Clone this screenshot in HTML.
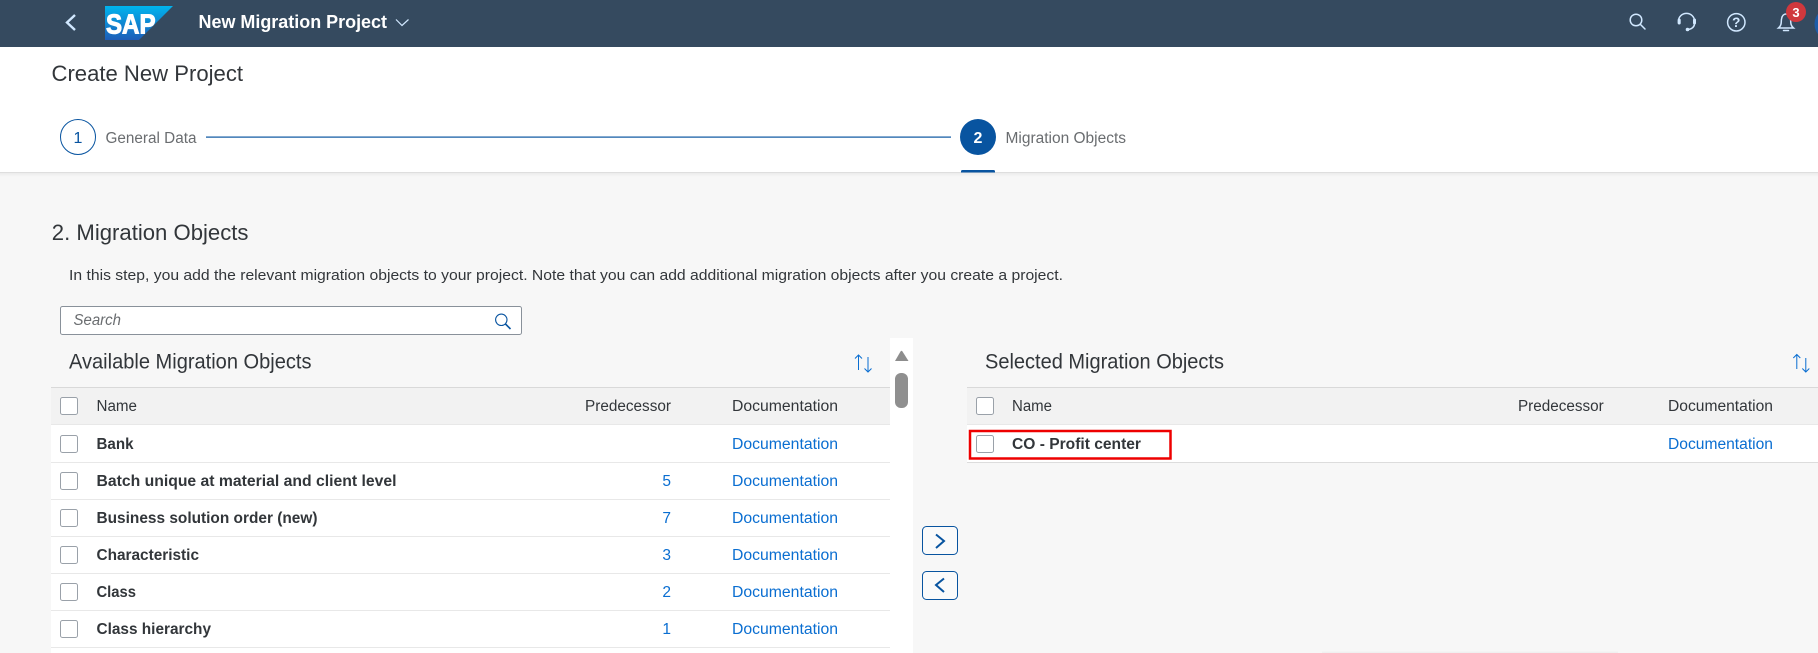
<!DOCTYPE html>
<html lang="en">
<head>
<meta charset="utf-8">
<title>Create New Project</title>
<style>
html,body{margin:0;padding:0;background:#f7f7f7;}
body{width:1818px;height:653px;overflow:hidden;}
svg{display:block;}
text{font-family:"Liberation Sans",sans-serif;}
.t{font-size:15.5px;fill:#32363a;}
.b{font-size:15.5px;fill:#32363a;font-weight:700;}
.l{font-size:15.5px;fill:#0a6ed1;}
.h{font-size:22.5px;fill:#32363a;}
.s{font-size:15.5px;fill:#6a6d70;}
.cb{fill:#fff;stroke:#9aa1a9;stroke-width:1;}
.ln{fill:#e8e8e8;}
.ic{fill:none;stroke:#d1e8ff;stroke-width:1.5;stroke-linecap:round;}
.bl{fill:none;stroke:#0a6ed1;stroke-width:1;}
</style>
</head>
<body>
<svg width="1818" height="653" viewBox="0 0 1818 653" xmlns="http://www.w3.org/2000/svg">
<defs>
<linearGradient id="g" x1="0" y1="0" x2="0" y2="1"><stop offset="0" stop-color="#00b4ee"/><stop offset="1" stop-color="#1d5db8"/></linearGradient>
<linearGradient id="sh" x1="0" y1="0" x2="0" y2="1"><stop offset="0" stop-color="#ececec"/><stop offset="1" stop-color="#f7f7f7"/></linearGradient>
</defs>
<rect width="1818" height="653" fill="#f7f7f7"/>

<!-- shell bar -->
<rect width="1818" height="47" fill="#354a5f"/>
<path d="M75 15 L67 22.500 L75 30" fill="none" stroke="#d1e8ff" stroke-width="2.400"/>
<polygon points="105,6 173,6 139,40 105,40" fill="url(#g)"/>
<text x="106" y="33.500" font-size="28" font-weight="700" fill="#fff" stroke="#fff" stroke-width="1.100" textLength="49.500" lengthAdjust="spacingAndGlyphs">SAP</text>
<text x="198.500" y="28" font-size="18.500" font-weight="700" fill="#fff" textLength="188.500" lengthAdjust="spacingAndGlyphs">New Migration Project</text>
<path d="M396 19.500 L402 25.500 L408.500 19.500" fill="none" stroke="#d1e8ff" stroke-width="1.200"/>

<circle cx="1636" cy="20" r="5.800" class="ic"/><path d="M1640.500 24.500 L1645 29" class="ic" stroke-width="2"/>
<path d="M1678.500 23 V21 a8 7.600 0 0 1 16 0 V24 a7 6 0 0 1 -6 5.500" class="ic"/>
<rect x="1677.700" y="18.500" width="3" height="6" rx="1.500" fill="#d1e8ff"/><rect x="1693" y="18.500" width="3" height="6" rx="1.500" fill="#d1e8ff"/><circle cx="1687.500" cy="29.500" r="1.800" fill="#d1e8ff"/>
<circle cx="1736.300" cy="22.300" r="8.700" class="ic" stroke-width="1.300"/>
<text x="1736.300" y="27" text-anchor="middle" font-size="13.500" font-weight="700" fill="#d1e8ff">?</text>
<path d="M1778.500 28 C1782 25 1781 22 1781.500 19 C1782 15.500 1784 14 1786 14 C1788 14 1790 15.500 1790.500 19 C1791 22 1790 25 1793.500 28 Z" class="ic" stroke-width="1.200"/>
<path d="M1783.500 30.500 H1788.500" class="ic" stroke-width="1.600"/>
<circle cx="1796" cy="12" r="10" fill="#d0383d"/>
<text x="1796" y="17" text-anchor="middle" font-size="13" font-weight="700" fill="#fff">3</text>
<circle cx="1831" cy="24" r="16.500" fill="#1d5ca8"/>

<!-- wizard header -->
<rect y="47" width="1818" height="125" fill="#fff"/>
<rect y="172" width="1818" height="1" fill="#dedede"/>
<rect y="173" width="1818" height="4" fill="url(#sh)"/>
<text x="51.500" y="81" class="h" textLength="191.500" lengthAdjust="spacingAndGlyphs">Create New Project</text>
<circle cx="78" cy="137" r="17.500" fill="#fff" stroke="#0854a0" stroke-width="1"/>
<text x="78" y="143" text-anchor="middle" font-size="16" fill="#0854a0">1</text>
<text x="105.500" y="143" class="s" textLength="91" lengthAdjust="spacingAndGlyphs">General Data</text>
<rect x="206" y="136.500" width="745" height="1.200" fill="#0854a0"/>
<circle cx="978" cy="137" r="18" fill="#0854a0"/>
<text x="978" y="143" text-anchor="middle" font-size="16" font-weight="700" fill="#fff">2</text>
<text x="1005.500" y="143" class="s" textLength="120.500" lengthAdjust="spacingAndGlyphs">Migration Objects</text>
<path d="M961 172 V171.500 Q961 170 962.500 170 H993.500 Q995 170 995 171.500 V172.500 H961 Z" fill="#0854a0"/>

<!-- section -->
<text x="51.800" y="240" class="h" textLength="196.700" lengthAdjust="spacingAndGlyphs">2. Migration Objects</text>
<text x="69" y="280" font-size="15" fill="#32363a" textLength="994" lengthAdjust="spacingAndGlyphs">In this step, you add the relevant migration objects to your project. Note that you can add additional migration objects after you create a project.</text>

<rect x="60.500" y="306.500" width="461" height="28" rx="2" fill="#fff" stroke="#89919a" stroke-width="1"/>
<text x="73.500" y="325" font-size="15.500" font-style="italic" fill="#6a6d70" textLength="47.500" lengthAdjust="spacingAndGlyphs">Search</text>
<circle cx="501.300" cy="319.800" r="5.700" fill="none" stroke="#0854a0" stroke-width="1.100"/>
<path d="M505.500 324 L510.500 329" fill="none" stroke="#0854a0" stroke-width="1.600"/>

<!-- left table -->
<text x="69" y="368.300" font-size="21" fill="#32363a" textLength="242.500" lengthAdjust="spacingAndGlyphs">Available Migration Objects</text>
<path d="M858.500 370 V355 M855 358.500 L858.500 355 L862 358.500" class="bl"/>
<path d="M868 357 V372 M864.500 368.500 L868 372 L871.500 368.500" class="bl"/>

<rect x="51" y="387" width="839" height="37" fill="#f2f2f2"/>
<rect x="51" y="387" width="839" height="1" fill="#d9d9d9"/>
<rect x="51" y="424" width="839" height="229" fill="#fff"/>
<rect x="51" y="424" width="839" height="1" class="ln"/>
<rect x="51" y="462" width="839" height="1" class="ln"/>
<rect x="51" y="499" width="839" height="1" class="ln"/>
<rect x="51" y="536" width="839" height="1" class="ln"/>
<rect x="51" y="573" width="839" height="1" class="ln"/>
<rect x="51" y="610" width="839" height="1" class="ln"/>
<rect x="51" y="647" width="839" height="1" class="ln"/>

<rect x="60.500" y="397.500" width="17" height="17" rx="2" class="cb"/>
<text x="96.500" y="411" class="t" textLength="40.500" lengthAdjust="spacingAndGlyphs">Name</text>
<text x="585" y="411" class="t" textLength="86" lengthAdjust="spacingAndGlyphs">Predecessor</text>
<text x="732" y="411" class="t" textLength="106" lengthAdjust="spacingAndGlyphs">Documentation</text>

<rect x="60.500" y="435.500" width="17" height="17" rx="2" class="cb"/>
<text x="96.500" y="449" class="b" textLength="37" lengthAdjust="spacingAndGlyphs">Bank</text>
<text x="732" y="449" class="l" textLength="106" lengthAdjust="spacingAndGlyphs">Documentation</text>

<rect x="60.500" y="472.500" width="17" height="17" rx="2" class="cb"/>
<text x="96.500" y="486" class="b" textLength="300" lengthAdjust="spacingAndGlyphs">Batch unique at material and client level</text>
<text x="671" y="486" class="l" text-anchor="end">5</text>
<text x="732" y="486" class="l" textLength="106" lengthAdjust="spacingAndGlyphs">Documentation</text>

<rect x="60.500" y="509.500" width="17" height="17" rx="2" class="cb"/>
<text x="96.500" y="523" class="b" textLength="221" lengthAdjust="spacingAndGlyphs">Business solution order (new)</text>
<text x="671" y="523" class="l" text-anchor="end">7</text>
<text x="732" y="523" class="l" textLength="106" lengthAdjust="spacingAndGlyphs">Documentation</text>

<rect x="60.500" y="546.500" width="17" height="17" rx="2" class="cb"/>
<text x="96.500" y="560" class="b" textLength="102.500" lengthAdjust="spacingAndGlyphs">Characteristic</text>
<text x="671" y="560" class="l" text-anchor="end">3</text>
<text x="732" y="560" class="l" textLength="106" lengthAdjust="spacingAndGlyphs">Documentation</text>

<rect x="60.500" y="583.500" width="17" height="17" rx="2" class="cb"/>
<text x="96.500" y="597" class="b" textLength="39.500" lengthAdjust="spacingAndGlyphs">Class</text>
<text x="671" y="597" class="l" text-anchor="end">2</text>
<text x="732" y="597" class="l" textLength="106" lengthAdjust="spacingAndGlyphs">Documentation</text>

<rect x="60.500" y="620.500" width="17" height="17" rx="2" class="cb"/>
<text x="96.500" y="634" class="b" textLength="114.500" lengthAdjust="spacingAndGlyphs">Class hierarchy</text>
<text x="671" y="634" class="l" text-anchor="end">1</text>
<text x="732" y="634" class="l" textLength="106" lengthAdjust="spacingAndGlyphs">Documentation</text>

<!-- scrollbar -->
<rect x="890" y="338" width="23" height="315" fill="#fff"/>
<path d="M895 361 L900.500 351.500 Q901.500 350 902.500 351.500 L908.500 361 Z" fill="#8d8d8d"/>
<rect x="895" y="373" width="13" height="35" rx="6" fill="#8f8f8f"/>

<!-- move buttons -->
<rect x="922.500" y="526.500" width="35" height="28" rx="4" fill="#fafafa" stroke="#0854a0" stroke-width="1"/>
<path d="M936 534.500 L944 541 L936 548" fill="none" stroke="#0854a0" stroke-width="2"/>
<rect x="922.500" y="571.500" width="35" height="28" rx="4" fill="#fafafa" stroke="#0854a0" stroke-width="1"/>
<path d="M944 578.500 L936 585 L944 592" fill="none" stroke="#0854a0" stroke-width="2"/>

<!-- right table -->
<text x="985" y="368.300" font-size="21" fill="#32363a" textLength="239" lengthAdjust="spacingAndGlyphs">Selected Migration Objects</text>
<path d="M1796.800 369 V354.500 M1793.300 358 L1796.800 354.500 L1800.300 358" class="bl"/>
<path d="M1805.800 358 V372 M1802.300 368.500 L1805.800 372 L1809.300 368.500" class="bl"/>

<rect x="967" y="387" width="851" height="37" fill="#f2f2f2"/>
<rect x="967" y="387" width="851" height="1" fill="#d9d9d9"/>
<rect x="967" y="424" width="851" height="38" fill="#fff"/>
<rect x="967" y="424" width="851" height="1" class="ln"/>
<rect x="967" y="462" width="851" height="1" fill="#dcdcdc"/>

<rect x="976.500" y="397.500" width="17" height="17" rx="2" class="cb"/>
<text x="1012" y="411" class="t" textLength="40" lengthAdjust="spacingAndGlyphs">Name</text>
<text x="1518" y="411" class="t" textLength="85.700" lengthAdjust="spacingAndGlyphs">Predecessor</text>
<text x="1668" y="411" class="t" textLength="105" lengthAdjust="spacingAndGlyphs">Documentation</text>

<rect x="976.500" y="435.500" width="17" height="17" rx="2" class="cb"/>
<text x="1012" y="449" class="b" textLength="129" lengthAdjust="spacingAndGlyphs">CO - Profit center</text>
<text x="1668" y="449" class="l" textLength="105" lengthAdjust="spacingAndGlyphs">Documentation</text>
<rect x="970" y="431" width="200.500" height="27.500" fill="none" stroke="#ee0000" stroke-width="2.500"/>

<rect x="1322" y="651.500" width="296" height="1.500" fill="#f0f0f0"/>
</svg>
</body>
</html>
